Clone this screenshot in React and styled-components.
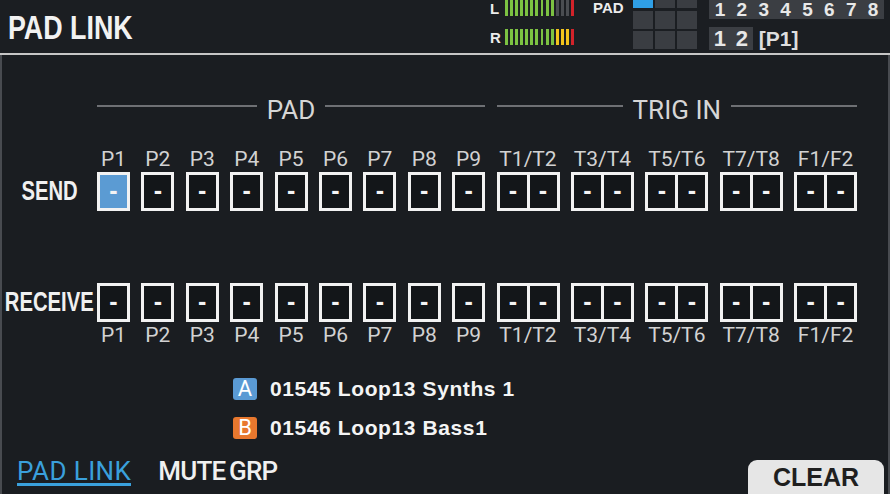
import React from 'react';
import styled, { createGlobalStyle } from 'styled-components';

const GlobalStyle = createGlobalStyle`
  html, body {
    margin: 0;
    padding: 0;
    background: #1a1d21;
  }
  body {
    font-family: 'Liberation Sans', Arial, sans-serif;
  }
`;

const singles = ['P1', 'P2', 'P3', 'P4', 'P5', 'P6', 'P7', 'P8', 'P9'];
const doubles = ['T1/T2', 'T3/T4', 'T5/T6', 'T7/T8', 'F1/F2'];
const allPads = [...singles, ...doubles];

const segColors = {
  g: '#7cc242',
  o: '#4a4d51',
  y: '#f2c41c',
  r: '#d2232a',
};

const meterL = ['g', 'g', 'g', 'g', 'g', 'g', 'g', 'g', 'g', 'g', 'o', 'o', 'o', 'r'];
const meterR = ['g', 'g', 'g', 'g', 'g', 'g', 'g', 'g', 'g', 'g', 'y', 'y', 'y', 'r'];

function MeterLine({ letter, segs }) {
  return (
    <MeterRow>
      <MeterLetter>{letter}</MeterLetter>
      <Bars>
        {segs.map((s, i) => (
          <Seg key={i} $color={segColors[s]} />
        ))}
      </Bars>
    </MeterRow>
  );
}

function PadCells({ activeIndex }) {
  return allPads.map((name, i) => (
    <Cell key={name} $active={i === activeIndex}>
      <Half>-</Half>
      {i >= singles.length && <Half>-</Half>}
    </Cell>
  ));
}

function PadNames() {
  return allPads.map((name) => <PadName key={name}>{name}</PadName>);
}

function App() {
  return (
    <Screen>
      <GlobalStyle />
      <Header>
        <Title>PAD LINK</Title>
        <Meter>
          <MeterLine letter="L" segs={meterL} />
          <MeterLine letter="R" segs={meterR} />
        </Meter>
        <PadLabel>PAD</PadLabel>
        <PadGrid>
          {Array.from({ length: 9 }).map((_, i) => (
            <PadCell key={i} $on={i === 0} />
          ))}
        </PadGrid>
        <Banks>
          <BankRow>
            {[1, 2, 3, 4, 5, 6, 7, 8].map((n) => (
              <Digit key={n}>{n}</Digit>
            ))}
          </BankRow>
          <LayerRow>
            <LayerBox>
              <LayerDigit>1</LayerDigit>
              <LayerDigit>2</LayerDigit>
            </LayerBox>
            <LayerName>[P1]</LayerName>
          </LayerRow>
        </Banks>
      </Header>

      <Body>
        <Row>
          <Spacer />
          <Track>
            <Section $span={9}>
              <SectionLine />
              <SectionTitle>PAD</SectionTitle>
              <SectionLine />
            </Section>
            <Section $span={5}>
              <SectionLine />
              <SectionTitle>TRIG IN</SectionTitle>
              <SectionLine />
            </Section>
          </Track>
        </Row>

        <Row $top="26.6px">
          <Spacer />
          <Track>
            <PadNames />
          </Track>
        </Row>

        <Row $top="1.8px">
          <SideLabel><span>SEND</span></SideLabel>
          <Track>
            <PadCells activeIndex={0} />
          </Track>
        </Row>

        <Row $top="72px">
          <SideLabel><span>RECEIVE</span></SideLabel>
          <Track>
            <PadCells activeIndex={-1} />
          </Track>
        </Row>

        <Row $top="3px">
          <Spacer />
          <Track>
            <PadNames />
          </Track>
        </Row>

        <Samples>
          <Sample>
            <Badge $color="#5a9ad4">A</Badge>
            <SampleName>01545 Loop13 Synths 1</SampleName>
          </Sample>
          <Sample>
            <Badge $color="#e8782e">B</Badge>
            <SampleName>01546 Loop13 Bass1</SampleName>
          </Sample>
        </Samples>

        <Footer>
          <Tab $active>PAD LINK</Tab>
          <Tab>MUTE GRP</Tab>
          <ClearButton>CLEAR</ClearButton>
        </Footer>
      </Body>
    </Screen>
  );
}

const Screen = styled.div`
  width: 890px;
  height: 494px;
  overflow: hidden;
  display: flex;
  flex-direction: column;
  background: #1a1d21;
`;

const Header = styled.header`
  height: 53px;
  flex-shrink: 0;
  display: flex;
  align-items: flex-start;
  border-bottom: 2px solid #c6c6c6;
  background: #1b1e22;
  overflow: hidden;
`;

const Title = styled.h1`
  flex: 1;
  margin: 9.5px 0 0;
  padding-left: 10px;
  font: 700 34px/34px 'Liberation Sans', Arial, sans-serif;
  color: #f2f2f2;
  white-space: nowrap;
  transform: scaleX(0.79);
  transform-origin: left top;
`;

const Meter = styled.div`
  width: 86px;
  display: flex;
  flex-direction: column;
  gap: 13px;
`;

const MeterRow = styled.div`
  display: flex;
  align-items: center;
  height: 16px;
`;

const MeterLetter = styled.span`
  width: 15px;
  font: 700 15px/15px 'Liberation Sans', Arial, sans-serif;
  color: #ececec;
`;

const Bars = styled.div`
  display: flex;
  gap: 2.2px;
  height: 100%;
`;

const Seg = styled.span`
  width: 2.9px;
  height: 100%;
  background: ${(p) => p.$color};
`;

const PadLabel = styled.span`
  margin-left: 17px;
  width: 34px;
  font: 700 15px/15px 'Liberation Sans', Arial, sans-serif;
  color: #ececec;
`;

const PadGrid = styled.div`
  margin-left: 6px;
  display: grid;
  grid-template-columns: repeat(3, 20px);
  grid-template-rows: 8px 18px 18px;
  gap: 2.5px 2px;
`;

const PadCell = styled.span`
  background: ${(p) => (p.$on ? '#2f9fe6' : '#3a3d42')};
`;

const Banks = styled.div`
  margin-left: 12px;
  margin-right: 6px;
  width: 175px;
  display: flex;
  flex-direction: column;
  gap: 8px;
`;

const BankRow = styled.div`
  display: grid;
  grid-template-columns: repeat(8, 1fr);
  height: 19px;
  background: #3b3e43;
`;

const Digit = styled.span`
  text-align: center;
  font: 700 19px/19px 'Liberation Sans', Arial, sans-serif;
  color: #e8e8e8;
`;

const LayerRow = styled.div`
  display: flex;
  align-items: center;
  height: 23px;
`;

const LayerBox = styled.div`
  display: grid;
  grid-template-columns: repeat(2, 21.875px);
  height: 23px;
  background: #3b3e43;
`;

const LayerDigit = styled.span`
  text-align: center;
  font: 700 22px/23px 'Liberation Sans', Arial, sans-serif;
  color: #e8e8e8;
`;

const LayerName = styled.span`
  margin-left: 6px;
  font: 700 21px/23px 'Liberation Sans', Arial, sans-serif;
  color: #dedede;
`;

const Body = styled.main`
  flex: 1;
  display: flex;
  flex-direction: column;
  padding-top: 41.6px;
  border-left: 2px solid #484b50;
  border-right: 2px solid #484b50;
`;

const Row = styled.div`
  display: flex;
  align-items: center;
  margin-top: ${(p) => p.$top || '0'};
`;

const Spacer = styled.div`
  width: 95px;
  flex-shrink: 0;
`;

const SideLabel = styled.div`
  width: 95px;
  flex-shrink: 0;
  display: flex;
  justify-content: center;
  font: 700 27px/27px 'Liberation Sans', Arial, sans-serif;
  color: #f0f0f0;
  white-space: nowrap;

  span {
    display: inline-block;
    transform: scaleX(0.75);
    transform-origin: center;
  }
`;

const Track = styled.div`
  display: grid;
  grid-template-columns: repeat(9, 33px) repeat(5, 63px);
  column-gap: 11.4px;
`;

const Section = styled.div`
  grid-column: span ${(p) => p.$span};
  display: flex;
  align-items: center;
  gap: 10px;
  height: 26px;
`;

const SectionLine = styled.span`
  flex: 1;
  height: 2px;
  margin-bottom: 8px;
  background: #6e7074;
`;

const SectionTitle = styled.span`
  font: 400 26px/26px Roboto, 'Liberation Sans', sans-serif;
  color: #d6d6d6;
  white-space: nowrap;
`;

const PadName = styled.span`
  text-align: center;
  font: 400 21px/21px Roboto, 'Liberation Sans', sans-serif;
  color: #d2d2d2;
  white-space: nowrap;
`;

const Cell = styled.div`
  height: 39px;
  box-sizing: border-box;
  display: flex;
  border: 3px solid #f2f2f2;
  background: ${(p) => (p.$active ? '#5b9bd3' : '#131619')};
`;

const Half = styled.span`
  flex: 1;
  display: flex;
  align-items: center;
  justify-content: center;
  padding-bottom: 3.4px;
  font: 700 25px/24px 'Liberation Sans', Arial, sans-serif;
  color: #f4f4f4;

  & + & {
    border-left: 3px solid #f2f2f2;
  }
`;

const Samples = styled.div`
  margin-top: 32px;
  padding-left: 231px;
  display: flex;
  flex-direction: column;
  gap: 17px;
`;

const Sample = styled.div`
  display: flex;
  align-items: center;
  gap: 13px;
  height: 22px;
`;

const Badge = styled.span`
  width: 24px;
  height: 22px;
  border-radius: 3px;
  display: flex;
  align-items: center;
  justify-content: center;
  background: ${(p) => p.$color};
  font: 400 22px/22px Roboto, 'Liberation Sans', sans-serif;
  color: #ffffff;
`;

const SampleName = styled.span`
  font: 700 21px/22px 'Liberation Sans', Arial, sans-serif;
  letter-spacing: 0.6px;
  color: #f4f4f4;
`;

const Footer = styled.footer`
  margin-top: auto;
  height: 34px;
  display: flex;
  align-items: flex-start;
`;

const Tab = styled.span`
  margin-top: -1px;
  margin-left: 15px;
  font: ${(p) => (p.$active ? 400 : 500)} 26px/24px Roboto, 'Liberation Sans', sans-serif;
  letter-spacing: ${(p) => (p.$active ? '0.4px' : '-0.8px')};
  word-spacing: ${(p) => (p.$active ? '0' : '-2px')};
  color: ${(p) => (p.$active ? '#3aa0dc' : '#f0f0f0')};
  border-bottom: 3px solid ${(p) => (p.$active ? '#3aa0dc' : 'transparent')};
  white-space: nowrap;

  & + & {
    margin-left: 27px;
  }
`;

const ClearButton = styled.button`
  margin-left: auto;
  margin-right: 4px;
  width: 136px;
  height: 34px;
  padding: 0;
  border: none;
  border-radius: 9px 9px 0 0;
  background: #e6e6e6;
  font: 700 25px/34px 'Liberation Sans', Arial, sans-serif;
  color: #1f1f1f;
`;

export default App;
